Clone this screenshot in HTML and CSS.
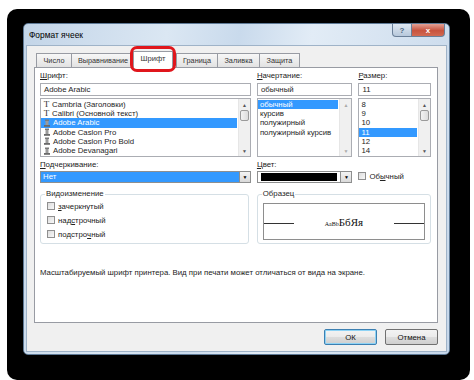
FILE: index.html
```html
<!DOCTYPE html>
<html lang="ru">
<head>
<meta charset="utf-8">
<link rel="stylesheet" href="styles.css">
</head>
<body>
<div class="backdrop">
  <div class="dialog">
    <div class="titlebar">
      <span class="title">Формат ячеек</span>
      <div class="caption-btns">
        <span class="cbtn help">?</span>
        <span class="cbtn close">x</span>
      </div>
    </div>
    <div class="body">
      <div class="tabs">
        <span class="tab">Число</span>
        <span class="tab">Выравнивание</span>
        <span class="tab active">Шрифт<span class="ring"></span></span>
        <span class="tab">Граница</span>
        <span class="tab">Заливка</span>
        <span class="tab">Защита</span>
      </div>
      <div class="panel">
        <div class="toprow">
          <div class="col c1">
            <div class="lbl"><u>Ш</u>рифт:</div>
            <div class="field">Adobe Arabic</div>
            <div class="list">
              <div class="items">
                <div class="item"><span class="tt">T</span>Cambria (Заголовки)</div>
                <div class="item"><span class="tt">T</span>Calibri (Основной текст)</div>
                <div class="item sel"><svg class="oi" viewBox="0 0 8 8"><rect x="2" y="0.5" width="4" height="1.5" fill="#7a7a7a"/><rect x="2.5" y="2" width="3" height="4" fill="#9a9a9a"/><rect x="1" y="6" width="6" height="1.8" fill="#6a6a6a"/></svg>Adobe Arabic</div>
                <div class="item"><svg class="oi" viewBox="0 0 8 8"><rect x="2" y="0.5" width="4" height="1.5" fill="#7a7a7a"/><rect x="2.5" y="2" width="3" height="4" fill="#9a9a9a"/><rect x="1" y="6" width="6" height="1.8" fill="#6a6a6a"/></svg>Adobe Caslon Pro</div>
                <div class="item"><svg class="oi" viewBox="0 0 8 8"><rect x="2" y="0.5" width="4" height="1.5" fill="#7a7a7a"/><rect x="2.5" y="2" width="3" height="4" fill="#9a9a9a"/><rect x="1" y="6" width="6" height="1.8" fill="#6a6a6a"/></svg>Adobe Caslon Pro Bold</div>
                <div class="item"><svg class="oi" viewBox="0 0 8 8"><rect x="2" y="0.5" width="4" height="1.5" fill="#7a7a7a"/><rect x="2.5" y="2" width="3" height="4" fill="#9a9a9a"/><rect x="1" y="6" width="6" height="1.8" fill="#6a6a6a"/></svg>Adobe Devanagari</div>
              </div>
              <div class="sbar"><span class="arr">▲</span><span class="thumb"></span><span class="fill"></span><span class="arr">▼</span></div>
            </div>
          </div>
          <div class="col c2">
            <div class="lbl"><u>Н</u>ачертание:</div>
            <div class="field">обычный</div>
            <div class="list">
              <div class="items">
                <div class="item sel plain">обычный</div>
                <div class="item plain">курсив</div>
                <div class="item plain">полужирный</div>
                <div class="item plain">полужирный курсив</div>
              </div>
              <div class="sbar empty"><span class="arr">▲</span><span class="fill"></span><span class="arr">▼</span></div>
            </div>
          </div>
          <div class="col c3">
            <div class="lbl"><u>Р</u>азмер:</div>
            <div class="field">11</div>
            <div class="list">
              <div class="items">
                <div class="item plain">8</div>
                <div class="item plain">9</div>
                <div class="item plain">10</div>
                <div class="item sel plain">11</div>
                <div class="item plain">12</div>
                <div class="item plain">14</div>
              </div>
              <div class="sbar"><span class="arr">▲</span><span class="thumb"></span><span class="fill"></span><span class="arr">▼</span></div>
            </div>
          </div>
        </div>
        <div class="midrow">
          <div class="col c1">
            <div class="lbl"><u>П</u>одчеркивание:</div>
            <div class="combo"><span class="cval sel">Нет</span><span class="drop">▼</span></div>
          </div>
          <div class="col c2">
            <div class="lbl"><u>Ц</u>вет:</div>
            <div class="combo"><span class="cval black"></span><span class="drop">▼</span></div>
          </div>
          <div class="col c3 chkcol">
            <label class="chk"><span class="box"></span>Об<u>ы</u>чный</label>
          </div>
        </div>
        <div class="grouprow">
          <div class="group g1">
            <span class="glabel">Видоизменение</span>
            <label class="chk"><span class="box"></span><u>з</u>ачеркнутый</label>
            <label class="chk"><span class="box"></span>над<u>с</u>трочный</label>
            <label class="chk"><span class="box"></span>подстро<u>ч</u>ный</label>
          </div>
          <div class="group g2">
            <span class="glabel">Образец</span>
            <div class="sample">
              <span class="line"></span>
              <span class="stext"><span class="small">AaBb</span>БбЯя</span>
              <span class="line"></span>
            </div>
          </div>
        </div>
        <div class="msg">Масштабируемый шрифт принтера. Вид при печати может отличаться от вида на экране.</div>
      </div>
      <div class="buttons">
        <span class="btn default">ОК</span>
        <span class="btn">Отмена</span>
      </div>
    </div>
  </div>
</div>
</body>
</html>
```
FILE: styles.css
```css
html, body {
  margin: 0;
  padding: 0;
  background: #fff;
}
body {
  width: 474px;
  height: 380px;
  overflow: hidden;
  font-family: "Liberation Sans", Arial, sans-serif;
  font-size: 7.8px;
  color: #1e1e1e;
}
u { text-decoration: underline; text-underline-offset: 1px; }
.backdrop {
  margin: 9px 0 0 7px;
  width: 463px;
  height: 371px;
  background: #000;
  border-radius: 10px;
  padding: 14px 0 0 16px;
  box-sizing: border-box;
}
.dialog {
  width: 427px;
  height: 332px;
  box-sizing: border-box;
  border: 1px solid #5f7a96;
  border-radius: 5px;
  background: linear-gradient(100deg, #c3d5e8 0%, #dbe7f3 30%, #c9daec 45%, #e2ecf6 60%, #c6d7ea 100%);
  display: flex;
  flex-direction: column;
  padding: 0 1px 1px 1px;
}
.titlebar {
  height: 21px;
  display: flex;
  align-items: center;
  justify-content: space-between;
  padding-left: 4px;
}
.title {
  font-size: 8.4px;
  color: #000;
  margin-top: 1px;
}
.caption-btns {
  display: flex;
  align-self: flex-start;
  margin-right: 3px;
}
.cbtn {
  height: 13px;
  display: flex;
  align-items: center;
  justify-content: center;
  box-sizing: border-box;
  border: 1px solid #6a7f98;
  border-top: none;
  font-size: 8px;
  font-weight: bold;
}
.help {
  width: 20px;
  border-radius: 0 0 0 4px;
  background: linear-gradient(#dfe8f2, #b7c8db);
  color: #4d6480;
}
.close {
  width: 33px;
  border-left: none;
  border-radius: 0 0 4px 0;
  background: linear-gradient(#e4a195, #c8533e 55%, #d26a52);
  color: #fff;
}
.body {
  flex: 1;
  margin: 0 1px 1px 1px;
  background: #f0f0f0;
  border: 1px solid #9fb3c8;
  display: flex;
  flex-direction: column;
  padding: 6px 8px 0 7px;
}
.tabs {
  display: flex;
  padding-left: 2px;
  height: 15px;
  align-items: flex-end;
  position: relative;
  z-index: 1;
}
.tab {
  height: 14px;
  box-sizing: border-box;
  border: 1px solid #989ba3;
  border-bottom: none;
  margin-right: -1px;
  background: linear-gradient(#f7f7f7, #e2e2e2);
  padding: 0 2px;
  display: flex;
  align-items: center;
  justify-content: center;
  color: #333;
  position: relative;
  white-space: nowrap;
  font-size: 7.3px;
}
.tab:nth-child(1) { width: 36px; }
.tab:nth-child(2) { width: 64px; }
.tab.active {
  height: 17px;
  background: #fff;
  width: 40px;
  margin: 0 -1px 0 -1px;
  padding-bottom: 2px;
  border-bottom: 1px solid #fff;
  margin-bottom: -1px;
  z-index: 2;
  font-size: 7.6px;
}
.tab:nth-child(4) { width: 42px; margin-left: 4px; }
.tab:nth-child(5) { width: 43px; }
.tab:nth-child(6) { width: 41px; }
.ring {
  position: absolute;
  left: -4px;
  top: -6px;
  width: 46px;
  height: 26px;
  box-sizing: border-box;
  border: 3px solid #e0161c;
  border-radius: 7px;
}
.panel {
  height: 256px;
  box-sizing: border-box;
  background: #fff;
  border: 1px solid #989ba3;
  padding: 2px 6px 0 5px;
  display: flex;
  flex-direction: column;
}
.toprow, .midrow {
  display: flex;
  gap: 6px;
}
.col { display: flex; flex-direction: column; }
.c1 { width: 212px; }
.c2 { width: 96px; }
.c3 { width: 73px; }
.lbl {
  height: 12px;
  line-height: 12px;
  color: #222;
}
.field {
  height: 13px;
  box-sizing: border-box;
  border: 1px solid #abadb3;
  padding-left: 3px;
  line-height: 11px;
  margin-top: 1px;
}
.list {
  height: 59px;
  box-sizing: border-box;
  border: 1px solid #abadb3;
  margin-top: 2px;
  display: flex;
}
.items { flex: 1; padding-top: 1px; overflow: hidden; }
.item {
  height: 9.2px;
  line-height: 9.2px;
  display: flex;
  align-items: center;
  white-space: nowrap;
  padding-left: 1px;
}
.item.plain { padding-left: 2px; }
.item.sel { background: #3399ff; color: #fff; margin-right: 1px; }
.tt {
  width: 9px;
  font-family: "Liberation Serif", serif;
  font-size: 9px;
  text-align: center;
  color: #333;
  margin-right: 1px;
}
.oi { width: 8px; height: 8px; margin: 0 2px 0 1px; }
.sbar {
  width: 11px;
  display: flex;
  flex-direction: column;
  background: #f0f0f0;
  border-left: 1px solid #e6e6e6;
}
.arr {
  height: 11px;
  font-size: 5px;
  display: flex;
  align-items: center;
  justify-content: center;
  color: #555;
}
.thumb {
  height: 11px;
  margin: 0 1px;
  box-sizing: border-box;
  border: 1px solid #9a9a9a;
  border-radius: 2px;
  background: linear-gradient(90deg, #f2f2f2, #dcdcdc);
}
.fill { flex: 1; }
.sbar.empty .arr { color: #aaa; }
.midrow { margin-top: 2px; }
.combo {
  height: 12px;
  box-sizing: border-box;
  border: 1px solid #8e8f8f;
  display: flex;
}
.cval { flex: 1; padding-left: 2px; line-height: 10px; }
.cval.sel { background: #3399ff; color: #fff; }
.cval.black { background: #000; margin: 1px 3px 1px 3px; }
.drop {
  width: 10px;
  font-size: 5px;
  display: flex;
  align-items: center;
  justify-content: center;
  background: linear-gradient(#f4f4f4, #d9d9d9);
  border-left: 1px solid #8e8f8f;
  color: #000;
}
.chkcol { justify-content: flex-end; padding-bottom: 2px; }
.chk {
  display: flex;
  align-items: center;
  color: #222;
  height: 10px;
}
.box {
  width: 8px;
  height: 8px;
  box-sizing: border-box;
  border: 1px solid #8f8f8f;
  background: linear-gradient(135deg, #dcdcdc, #f8f8f8);
  margin-right: 3px;
}
.grouprow {
  display: flex;
  gap: 8px;
  margin-top: 11px;
}
.group {
  position: relative;
  height: 50px;
  box-sizing: border-box;
  border: 1px solid #d5dfe5;
  border-radius: 3px;
}
.glabel {
  position: absolute;
  top: -6px;
  left: 4px;
  background: #fff;
  padding: 0 1px;
  line-height: 10px;
}
.g1 {
  width: 211px;
  padding: 6px 0 0 6px;
  display: flex;
  flex-direction: column;
  gap: 4px;
}
.g2 {
  width: 176px;
  padding: 8px 5px 3px 5px;
}
.sample {
  height: 37px;
  box-sizing: border-box;
  border: 1px solid #8e8e8e;
  display: flex;
  align-items: center;
}
.line {
  width: 30px;
  height: 1px;
  background: #333;
  margin-top: 4px;
}
.stext {
  flex: 1;
  text-align: center;
  font-family: "Liberation Serif", serif;
  font-size: 11px;
  color: #111;
}
.small { font-size: 6px; }
.msg {
  margin-top: 24px;
  color: #222;
}
.buttons {
  display: flex;
  justify-content: flex-end;
  gap: 8px;
  padding: 6px 0 0 0;
}
.btn {
  width: 53px;
  height: 16px;
  box-sizing: border-box;
  border: 1px solid #707070;
  border-radius: 2px;
  background: linear-gradient(#f3f3f3 0%, #ebebeb 50%, #dddddd 51%, #cfcfcf 100%);
  display: flex;
  align-items: center;
  justify-content: center;
  color: #111;
}
.btn.default {
  border-color: #3c7fb1;
  box-shadow: inset 0 0 0 1px #8ed3f5;
}
```
